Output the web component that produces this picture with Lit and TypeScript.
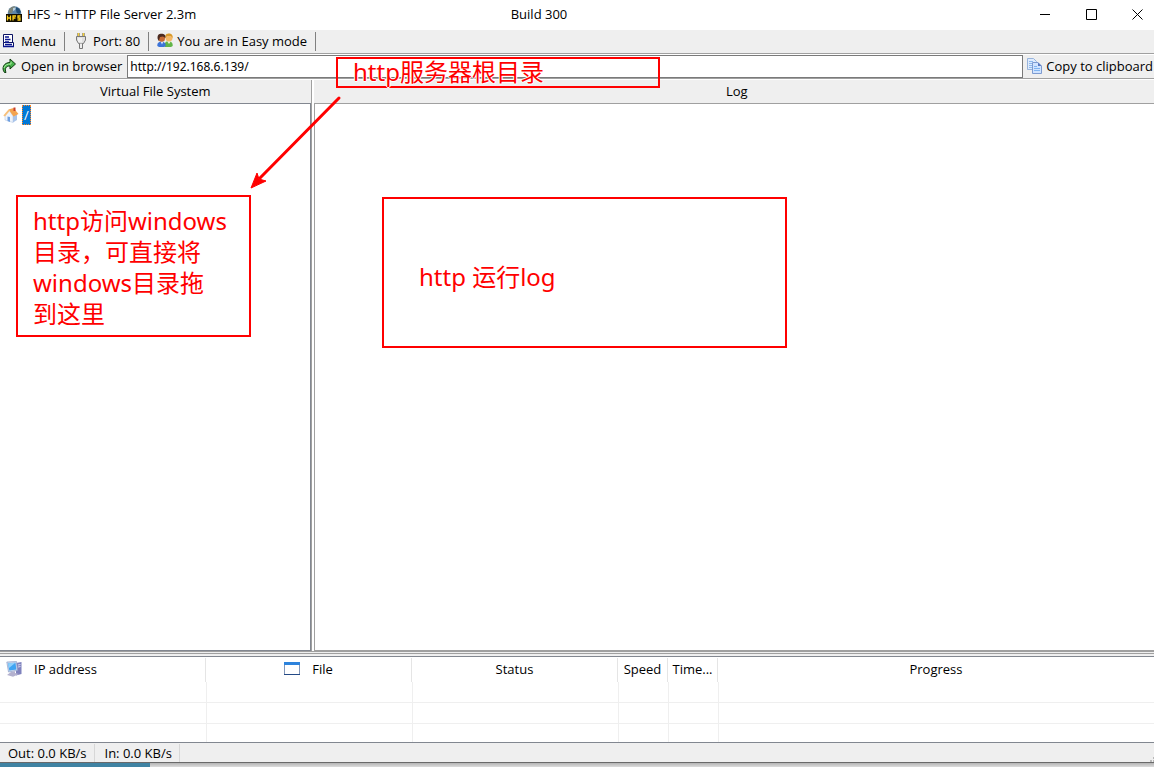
import { LitElement, html, css, svg } from "lit";
import { customElement, state } from "lit/decorators.js";

const appIcon = html`<svg class="icon" viewBox="0 0 16 16" aria-hidden="true">
  <circle cx="8.5" cy="7" r="6.8" fill="#5e86a8" />
  <path d="M3 3.500C5 1 7 .4 8.500 .3L9.500 2 7 4 6 7 2.500 7Z" fill="#7d8478" />
  <path d="M9.500 1 13 2.500 15 6 13 8 10.500 6.500Z" fill="#234f77" />
  <path d="M7 2 10 1.500 9 4 7 5Z" fill="#b9d0de" />
  <rect x="0" y="8" width="16" height="8" fill="#100c00" />
  <path d="M1.500 9.500V14.500M4.500 9.500V14.500M1.500 12H4.500M7 14.500V10H10M7 12H9.500M14.500 10H12V12H14V14H11.500" fill="none" stroke="#ffd21c" stroke-width="1.300" />
</svg>`;

const menuIcon = html`<svg class="icon" viewBox="0 0 16 16" aria-hidden="true">
  <path d="M2.500 1.500H11.500V9.500H2.500Z" fill="#fff" stroke="#0a1264" />
  <path d="M2.500 9.500H12.500V13.500H2.500Z" fill="#fff" stroke="#0a1264" />
  <path d="M4 4H8M4 6.500H9.500M4 9H8M4 11.500H11M2 13.500H13" stroke="#0a1690" stroke-width="1.400" />
</svg>`;

const plugIcon = html`<svg class="icon" viewBox="0 0 16 16" aria-hidden="true">
  <path d="M5.500 0V4M10.500 0V4" stroke="#6d5a16" stroke-width="2" />
  <path d="M5.500 0V3M10.500 0V3" stroke="#f5cf3c" />
  <path d="M3.500 3.500H12.500V7L10.500 10.500H5.500L3.500 7Z" fill="#e0e0e0" stroke="#777" />
  <path d="M6 5V9M8 5V9" stroke="#fff" />
  <path d="M6.500 10.500V15.500H9.500V10.500" fill="#eee" stroke="#777" />
</svg>`;

const usersIcon = html`<svg class="icon" viewBox="0 0 16 16" aria-hidden="true">
  <path d="M7.500 14C7 10 9 8 11.500 8S16 10 15.700 13L14 14Z" fill="#62b548" />
  <path d="M10 8 12 11 14 8Z" fill="#e8f3df" />
  <circle cx="12" cy="4.800" r="3.600" fill="#f4b867" />
  <path d="M8.300 5C8 1 10 .5 12 .5S16 1.500 15.600 5L14 3H10Z" fill="#d99a29" />
  <path d="M.3 13C0 10 2 8.500 4.500 8.500S9 10 8.700 13L7 14H2Z" fill="#3d74d8" />
  <path d="M3.500 8.500 5 11.500 6.500 8.500Z" fill="#d7e6fb" />
  <circle cx="4.700" cy="5.500" r="3.300" fill="#c66a35" />
  <path d="M.7 6C0 2 2 .8 4.500 .8S9 2 8.300 5L6 3.500 3 4 1.800 8Z" fill="#4b2a20" />
</svg>`;

const openIcon = html`<svg class="icon" viewBox="0 0 16 16" aria-hidden="true">
  <path d="M3.500 14.500C0 10 3 4.500 9 4.500V1L14.500 6 9 11V8C5 8 3.500 10.500 5 14.500Z" fill="#48b24c" stroke="#123d12" />
  <path d="M3 10C4 7 6 6 10 6V3.500" fill="none" stroke="#a7ef9c" />
</svg>`;

const copyIcon = html`<svg class="icon" viewBox="0 0 16 16" aria-hidden="true">
  <path d="M.5 .5H6.500L9.500 3.500V11.500H.5Z" fill="#deebfd" stroke="#98b4dc" />
  <path d="M2 3.500H6M2 5.500H6M2 7.500H6M2 9.500H5" stroke="#8db9ee" />
  <path d="M5.500 4.500H11L14.500 8V15.500H5.500Z" fill="#cfe3ff" stroke="#7e9bd0" />
  <path d="M11 4.500V8H14.500Z" fill="#5878c0" />
  <path d="M7 8.500H10M7 10.500H13M7 12.500H13" stroke="#80b4f0" />
</svg>`;

const homeIcon = html`<svg class="icon" viewBox="0 0 16 16" aria-hidden="true">
  <path d="M2 8 6 3 10 9V15.500L2 13Z" fill="#eef4fc" stroke="#b8cbe4" stroke-width=".6" />
  <path d="M10 8 14 6V13L10 15.500Z" fill="#a9c4ea" />
  <path d="M5.500 2.500 10.500 1 15.500 7 10.500 9.500Z" fill="#f3a450" />
  <path d="M.3 8.500 5.500 2.500 7 3.500 2 9.500Z" fill="#f8c07a" />
  <path d="M10.500 .5H12.500V4H10.500Z" fill="#c8402c" />
  <path d="M4.500 9.500 7 10V15L4.500 14Z" fill="#6f9fe0" />
</svg>`;

const pcIcon = html`<svg class="icon" viewBox="0 0 16 16" aria-hidden="true">
  <path d="M10 2 15.500 1V13L10 14.500Z" fill="#7f82bd" />
  <path d="M12 4 14.500 3.500M12 6 14.500 5.500" stroke="#d8daf2" />
  <path d="M.8 1 10.500 .5 11.500 9.500 2.500 11Z" fill="#c9d6ec" stroke="#8fa1c8" stroke-width=".7" />
  <path d="M2 2.200 9.500 1.800 10.300 8.500 3.300 9.500Z" fill="#3fa4f2" />
  <path d="M2 2.200 9.500 1.800 3 7Z" fill="#8fd0fb" />
  <path d="M5 11 9 10.300V12L13 13 7 15.800 1 14Z" fill="#b3b1cf" />
</svg>`;

const windowIcon = html`<svg class="icon" viewBox="0 0 16 16" aria-hidden="true">
  <rect x=".5" y="1.500" width="15" height="12" fill="#fff" stroke="#8296b8" />
  <path d="M0 2.500H16" stroke="#2d83dc" stroke-width="3" />
  <path d="M0 13.500H16" stroke="#244a86" />
</svg>`;

@customElement("app-root")
export class AppRoot extends LitElement {
  @state() private url = "http://192.168.6.139/";

  static styles = css`
    :host {
      display: flex;
      flex-direction: column;
      position: relative;
      height: 100vh;
      overflow: hidden;
      background: #efefef;
      color: #000;
      font: 13px/18px "Open Sans", "Noto Sans CJK SC", sans-serif;
    }
    button {
      display: flex;
      align-items: center;
      gap: 4px;
      border: 0;
      margin: 0;
      padding: 0;
      background: none;
      font: inherit;
      color: inherit;
      white-space: nowrap;
    }
    .icon { width: 16px; height: 16px; flex: none; display: block; }
    .titlebar {
      display: grid;
      grid-template-columns: 1fr auto 1fr;
      align-items: center;
      height: 28px;
      padding-bottom: 2px;
      flex: none;
      background: #fff;
    }
    .name { display: flex; align-items: center; gap: 5px; padding-left: 6px; }
    .build { padding-right: 76px; }
    .titlebar h1, .titlebar p { margin: 0; font: inherit; }
    .controls { display: flex; justify-content: flex-end; gap: 12px; }
    .controls button { width: 34px; height: 28px; justify-content: center; }
    .controls svg { width: 11px; height: 11px; }
    .toolbar {
      display: flex;
      align-items: center;
      height: 23px;
      flex: none;
      border-bottom: 1px solid #a0a0a0;
      box-shadow: 0 1px #fff;
    }
    .toolbar button { height: 19px; border-right: 1px solid #808080; padding: 0 8px 2px; }
    .toolbar button:first-child { padding-left: 1px; }
    .address {
      display: flex;
      height: 23px;
      flex: none;
      margin-top: 1px;
      border-bottom: 1px solid #a0a0a0;
    }
    .address button { padding: 0 5px 1px 1px; }
    .address .copy { padding: 0 1px 1px 4px; gap: 3px; }
    .address input {
      flex: 1;
      min-width: 0;
      box-sizing: border-box;
      border: 1px solid #7a7a7a;
      border-radius: 0;
      padding: 0 2px;
      font: 12px "Noto Sans", sans-serif;
      color: inherit;
      background: #fff;
      outline: 0;
    }
    .panes {
      flex: 1;
      min-height: 0;
      display: grid;
      grid-template-columns: 27% 1fr;
      border-top: 1px solid #fff;
      border-bottom: 1px solid #a0a0a0;
    }
    .pane { display: flex; flex-direction: column; min-width: 0; }
    .pane h2 {
      margin: 0;
      height: 23px;
      font: inherit;
      line-height: 23px;
      text-align: center;
    }
    .vfs { border-right: 1px solid #a0a0a0; }
    .log { border-left: 2px solid #fff; }
    .log h2 { padding-left: 6px; }
    .view { flex: 1; background: #fff; border: 1px solid #828790; border-left: 0; }
    .log .view { border: 1px solid #a0a0a0; border-right: 0; }
    .root { display: flex; align-items: center; gap: 3px; padding: 1px 3px; }
    .root span {
      background: #0078d7;
      color: #fff;
      width: 7px;
      text-align: center;
      border: 1px dotted #ff8728;
    }
    .transfers {
      flex: none;
      margin-top: 1px;
      border-top: 1px solid #a0a0a0;
      padding-top: 2px;
    }
    .frame { background: #fff; border-top: 1px solid #828790; border-bottom: 1px solid #828790; padding-top: 1px; }
    table { width: 100%; table-layout: fixed; border-collapse: separate; border-spacing: 0; }
    th {
      box-sizing: border-box;
      height: 24px;
      padding: 0 0 2px;
      font-weight: 400;
      border-right: 1px solid #e5e5e5;
      white-space: nowrap;
    }
    th:last-child { border-right: 0; }
    .wide { width: 206px; }
    .narrow { width: 50px; }
    .head { display: flex; align-items: center; justify-content: center; gap: 12px; }
    .head.start { justify-content: flex-start; padding-left: 6px; }
    td { height: 20px; padding: 0; border-bottom: 1px solid #efefef; }
    td + td { border-left: 1px solid #efefef; }
    tbody tr:last-child td { height: 18px; border-bottom: 0; }
    .status {
      display: flex;
      align-items: center;
      height: 19px;
      flex: none;
      border-bottom: 1px solid #696969;
    }
    .status span { padding: 0 7px 0 8px; border-right: 1px solid #d7d7d7; }
    .status span + span { padding: 0 7px 0 10px; }
    .grip { margin-left: auto; align-self: flex-end; width: 4px; height: 6px; }
    .desktop { height: 4px; flex: none; display: flex; background: linear-gradient(#b4b4b4, #dcdcdc); }
    .desktop i { width: 13%; background: #3f83a3; }
    .note {
      position: absolute;
      box-sizing: border-box;
      border: 2px solid #f00;
      color: #f00;
      font: 24px/31px "Noto Sans", "Noto Sans CJK SC", sans-serif;
      white-space: nowrap;
      pointer-events: none;
    }
    .note-address {
      left: 336px; top: 57px; width: 324px; height: 31px;
      padding-left: 15px;
      line-height: 25px;
      text-shadow: 1px 0 #fff, -1px 0 #fff, 0 1px #fff, 0 -1px #fff;
    }
    .note-tree { left: 16px; top: 195px; width: 235px; height: 142px; padding: 8px 15px; }
    .note-log { left: 382px; top: 197px; width: 405px; height: 151px; padding: 62px 35px; }
    .arrow { position: absolute; left: 240px; top: 90px; width: 110px; height: 105px; pointer-events: none; }
  `;

  render() {
    return html`
      <header class="titlebar">
        <div class="name">${appIcon}<h1>HFS ~ HTTP File Server 2.3m</h1></div>
        <p class="build">Build 300</p>
        <div class="controls">
          <button aria-label="Minimize"><svg viewBox="0 0 11 11"><path d="M0 5.500H10" stroke="#000" /></svg></button>
          <button aria-label="Maximize"><svg viewBox="0 0 11 11"><path d="M.5 .5H10.500V10.500H.5Z" fill="none" stroke="#000" /></svg></button>
          <button aria-label="Close"><svg viewBox="0 0 11 11"><path d="M.5 .5 10.500 10.500M10.500 .5 .5 10.500" stroke="#000" /></svg></button>
        </div>
      </header>
      <nav class="toolbar">
        <button>${menuIcon}Menu</button>
        <button>${plugIcon}Port: 80</button>
        <button>${usersIcon}You are in Easy mode</button>
      </nav>
      <div class="address">
        <button>${openIcon}Open in browser</button>
        <input aria-label="Server address" .value=${this.url}
          @input=${(e: Event) => (this.url = (e.target as HTMLInputElement).value)} />
        <button class="copy">${copyIcon}Copy to clipboard</button>
      </div>
      <main class="panes">
        <section class="pane vfs">
          <h2>Virtual File System</h2>
          <div class="view"><div class="root">${homeIcon}<span>/</span></div></div>
        </section>
        <section class="pane log">
          <h2>Log</h2>
          <div class="view"></div>
        </section>
      </main>
      <section class="transfers">
        <div class="frame">
          <table>
            <thead>
              <tr>
                <th class="wide"><div class="head start">${pcIcon}IP address</div></th>
                <th class="wide"><div class="head">${windowIcon}File</div></th>
                <th class="wide">Status</th>
                <th class="narrow">Speed</th>
                <th class="narrow">Time...</th>
                <th>Progress</th>
              </tr>
            </thead>
            <tbody>
              ${[0, 1, 2].map(() => html`<tr>${[0, 1, 2, 3, 4, 5].map(() => html`<td></td>`)}</tr>`)}
            </tbody>
          </table>
        </div>
      </section>
      <footer class="status">
        <span>Out: 0.0 KB/s</span><span>In: 0.0 KB/s</span>
        <svg class="grip" viewBox="0 0 4 6" aria-hidden="true">
          ${[[0, 4], [3, 4], [3, 1]].map(([x, y]) => svg`<rect x=${x} y=${y} width="2" height="2" fill="#b8b8b8" />`)}
        </svg>
      </footer>
      <div class="desktop"><i></i></div>
      <div class="note note-address">http服务器根目录</div>
      <div class="note note-tree">http访问windows<br />目录，可直接将<br />windows目录拖<br />到这里</div>
      <div class="note note-log">http 运行log</div>
      <svg class="arrow" viewBox="0 0 110 105" aria-hidden="true">
        <path d="M99 8 20 88" stroke="#f00" stroke-width="3" stroke-linecap="round" />
        <path d="M11 98 17 83 19 89 26 91Z" fill="#f00" stroke="#f00" />
      </svg>
    `;
  }
}
